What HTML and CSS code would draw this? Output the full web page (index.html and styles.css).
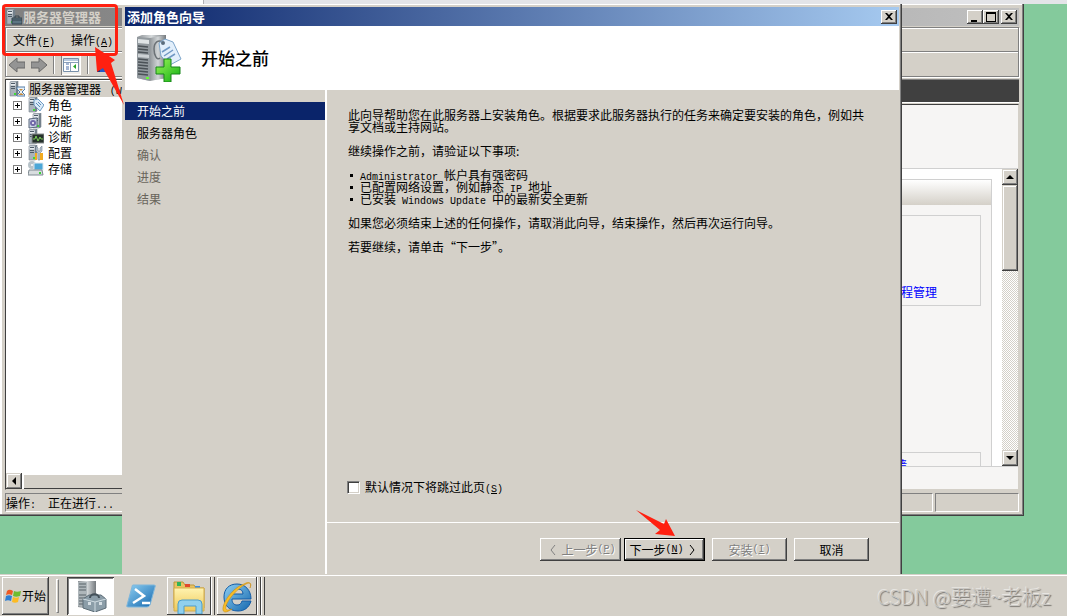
FILE: index.html
```html
<!DOCTYPE html>
<html lang="zh-CN">
<head>
<meta charset="utf-8">
<title>添加角色向导</title>
<link rel="stylesheet" href="styles.css">
</head>
<body>
<svg class="defs" aria-hidden="true">
  <defs>
    <linearGradient id="metal" x1="0" x2="1" y1="0" y2="0"><stop offset="0" stop-color="#8b9094"/><stop offset=".5" stop-color="#d5d9db"/><stop offset="1" stop-color="#74797d"/></linearGradient>
    <linearGradient id="green" x1="0" x2="1" y1="0" y2="1"><stop offset="0" stop-color="#9bf558"/><stop offset="1" stop-color="#0fae12"/></linearGradient>
    <linearGradient id="gold" x1="0" x2="0" y1="0" y2="1"><stop offset="0" stop-color="#fff3b0"/><stop offset="1" stop-color="#efc95a"/></linearGradient>
    <linearGradient id="blue" x1="0" x2="1" y1="0" y2="1"><stop offset="0" stop-color="#8fd0f2"/><stop offset="1" stop-color="#1467ae"/></linearGradient>
    <symbol id="mini-server" viewBox="0 0 16 16"><path d="M1 1l2-1h6v14l-2 1H1z" fill="#a9b3bb" stroke="#7b858d" stroke-width=".6"/><path d="M1.500 1.500h5v3h-5z" fill="#e8edf0"/><path d="M2 2.500h4M2 5.500h4M2 7.500h4" stroke="#4d5a66"/><path d="M7 1v14l2-1V0z" fill="#74818c"/><path d="M5 12h2v2H5z" fill="#3ddc34"/></symbol>
  </defs>
</svg>
<div class="screen">
  <div class="topstrip"><div class="topstrip-tab"></div></div>
  <main class="desktop">
    <section class="window manager">
      <header class="titlebar titlebar-off">
        <svg class="ic16" viewBox="0 0 16 16"><use href="#mini-server" width="16" height="16"/><path d="M6 9h10v6H6z" fill="#5d7583" stroke="#34454f"/><path d="M9 9V7h4v2M6 11h10" fill="none" stroke="#34454f"/></svg>
        <h2>服务器管理器</h2>
        <div class="caption">
          <button class="cap" aria-label="最小化"><svg viewBox="0 0 14 14"><path d="M3 10h6v2H3z"/></svg></button>
          <button class="cap" aria-label="最大化"><svg viewBox="0 0 14 14"><path d="M2 2h10v10H2zM3 4v7h8V4z" fill-rule="evenodd"/></svg></button>
          <button class="cap cap-close" aria-label="关闭"><svg viewBox="0 0 14 14"><path d="M3 3h2l2 2 2-2h2L8 6.500 11 10H9L7 8l-2 2H3l3-3.500z"/></svg></button>
        </div>
      </header>
      <div class="bars">
        <nav class="menubar"><button>文件<span class="lat">(<u>F</u>)</span></button><button>操作<span class="lat">(<u>A</u>)</span></button></nav>
        <div class="toolbar">
          <button aria-label="后退"><svg class="ic16" viewBox="0 0 16 16"><path d="M8 1v4h8v6H8v4L0 8z" fill="#949494" stroke="#696969"/></svg></button>
          <button aria-label="前进"><svg class="ic16" viewBox="0 0 16 16"><path d="M8 1v4H0v6h8v4l8-7z" fill="#949494" stroke="#696969"/></svg></button>
          <i class="sep"></i>
          <button class="pressed" aria-label="控制台树"><svg class="ic16" viewBox="0 0 16 16"><path d="M.5 1.500h15v13H.5z" fill="#fff" stroke="#7890aa"/><path d="M1 2h14v2H1z" fill="#b9cae0"/><path d="M3 7h3M3 10h3M3 12h3" stroke="#4a6ca8"/><path d="M7.500 5v9M1 5.500h14" stroke="#8a9fb8"/><path d="M13 7v5l-3-2.500z" fill="#27a427"/></svg></button>
          <i class="sep"></i>
          <button aria-label="帮助"><svg class="ic16" viewBox="0 0 16 16"><path d="M2 0h12v15H2z" fill="#2458c6"/><path d="M2 0h3v15H2z" fill="#153885"/></svg></button>
        </div>
      </div>
      <div class="split">
        <div class="treebox">
          <ul class="tree">
            <li class="root"><svg class="ic16" viewBox="0 0 16 16"><use href="#mini-server" width="16" height="16"/><path d="M8 6h8v2l-3 3 3 3v1H8v-1l3-3-3-3z" fill="#e8f2fa" stroke="#537ba5"/><path d="M10 8h4l-2 2zM9 14l3-2 3 2z" fill="#c58a3c"/></svg><span>服务器管理器 <span class="lat"> (WI</span></span></li>
            <li><button class="plus" aria-label="展开"></button><svg class="ic16" viewBox="0 0 16 16"><use href="#mini-server" width="16" height="16"/><path d="M6 3l4-1 6 6-4 6-6-6z" fill="#dbeaf7" stroke="#6f9cc4"/><path d="M8 6l4 4M10 5l3 3" stroke="#5d8cb8"/></svg><span>角色</span></li>
            <li><button class="plus" aria-label="展开"></button><svg class="ic16" viewBox="0 0 16 16"><use href="#mini-server" x="4" width="16" height="16"/><path d="M1 6l8-1v9l-8 1z" fill="#cfd8e8" stroke="#59677c"/><circle cx="5" cy="10" r="3" fill="#7168a8"/><circle cx="5" cy="10" r="1" fill="#fff"/></svg><span>功能</span></li>
            <li><button class="plus" aria-label="展开"></button><svg class="ic16" viewBox="0 0 16 16"><use href="#mini-server" width="16" height="16"/><path d="M4 5h12v9H4z" fill="#26322b" stroke="#8b8f91"/><path d="M5 10h2l1-3 2 5 2-4 1 2h2" fill="none" stroke="#79cb55"/></svg><span>诊断</span></li>
            <li><button class="plus" aria-label="展开"></button><svg class="ic16" viewBox="0 0 16 16"><use href="#mini-server" width="16" height="16"/><path d="M8 1v5l2 2v7h2V8l2-2V1l-2 2v3h-2V3z" fill="#b9c5cf" stroke="#708090" stroke-width=".6"/><path d="M7 8h2v7H7zM12 8h3v7h-3z" fill="#f1aa20"/></svg><span>配置</span></li>
            <li><button class="plus" aria-label="展开"></button><svg class="ic16" viewBox="0 0 16 16"><circle cx="4" cy="4" r="4" fill="#b8c3c9"/><circle cx="4" cy="4" r="1" fill="#fff"/><path d="M6 2h9v7H6z" fill="#4ca7d7" stroke="#dce7ee"/><path d="M1 9h13l1 5H0z" fill="#d8dddf" stroke="#7f8a91"/><path d="M11 11h2v2h-2z" fill="#39d335"/></svg><span>存储</span></li>
          </ul>
          <div class="hscroll"><button class="sb" aria-label="向左滚动"><svg viewBox="0 0 8 8"><path d="M6 0v8L2 4z"/></svg></button><div class="hthumb"></div></div>
        </div>
        <div class="pane">
          <div class="darkband"></div>
          <div class="pane-body">
            <div class="summary"></div>
            <div class="scroller">
              <div class="cards">
                <div class="card">
                  <div class="card-head"></div>
                  <div class="box box-a"><a href="#">程管理</a></div>
                  <div class="box box-b"><a href="#">墙</a></div>
                </div>
              </div>
              <div class="vscroll">
                <button class="sb" aria-label="向上滚动"><svg viewBox="0 0 8 8"><path d="M4 2l4 4H0z"/></svg></button>
                <div class="vthumb"></div>
                <button class="sb sb-end" aria-label="向下滚动"><svg viewBox="0 0 8 8"><path d="M0 2h8L4 6z"/></svg></button>
              </div>
            </div>
            <div class="below"></div>
          </div>
        </div>
      </div>
      <footer class="status"><div class="status-main">操作<span class="lat">:  </span>正在进行<span class="lat">...</span></div><div class="status-end"></div></footer>
    </section>

    <section class="window wizard">
      <header class="titlebar titlebar-on">
        <h2>添加角色向导</h2>
        <button class="cap cap-close" aria-label="关闭"><svg viewBox="0 0 14 14"><path d="M3 3h2l2 2 2-2h2L8 6.500 11 10H9L7 8l-2 2H3l3-3.500z"/></svg></button>
      </header>
      <div class="wizard-head">
        <svg class="ic48" viewBox="0 0 48 48">
          <path d="M2 3l5-2h24v43l-17 3L2 44z" fill="url(#metal)"/>
          <path d="M2 3l13 1v43L2 44z" fill="#939a9f"/><path d="M15 4l16-3v43l-16 3z" fill="url(#metal)" opacity=".9"/>
          <path d="M3 5l11 1v4L3 9z" fill="#dfe4e6"/>
          <path d="M3 12l10 1M3 15l10 1M3 18l10 1M3 25l10 1M3 28l10 1M3 31l10 1M3 34l10 1M3 37l10 1M3 40l10 1" stroke="#4b5257" stroke-width="1.500"/>
          <path d="M3 20l11 1v3L3 23z" fill="#cdd2d5"/><path d="M11 43h3v2h-3z" fill="#6f3"/>
          <path d="M29 9c-6-5-10 0-10 6s3 12 6 9" fill="none" stroke="#6c7277" stroke-width="1.500"/>
          <path d="M24 9l6-4 8 3 8 17-11 6-9-9z" fill="#e2effb" stroke="#7da5ca"/><circle cx="28" cy="9" r="2" fill="#5b6d7c"/>
          <path d="M27 18l8-5M29 22l9-6M32 25l8-5" stroke="#7098c4" stroke-width="1.500"/>
          <path d="M29 25h7v8h9v7h-9v8h-7v-8h-8v-7h8z" fill="url(#green)" stroke="#168519"/>
        </svg>
        <h1>开始之前</h1>
      </div>
      <div class="wizard-body">
        <ol class="steps">
          <li class="current">开始之前</li><li>服务器角色</li><li class="later">确认</li><li class="later">进度</li><li class="later">结果</li>
        </ol>
        <div class="page">
          <div class="page-text">
            <p>此向导帮助您在此服务器上安装角色。根据要求此服务器执行的任务来确定要安装的角色，例如共享文档或主持网站。</p>
            <p>继续操作之前，请验证以下事项:</p>
            <ul class="facts">
              <li><span class="lat">Administrator </span>帐户具有强密码</li>
              <li>已配置网络设置，例如静态<span class="lat"> IP </span>地址</li>
              <li>已安装<span class="lat"> Windows Update </span>中的最新安全更新</li>
            </ul>
            <p>如果您必须结束上述的任何操作，请取消此向导，结束操作，然后再次运行向导。</p>
            <p>若要继续，请单击“下一步”。</p>
          </div>
          <label class="skip"><input type="checkbox"><span>默认情况下将跳过此页<span class="lat">(<u>S</u>)</span></span></label>
          <div class="actions">
            <button class="btn btn-step" disabled><svg class="chev" viewBox="0 0 6 10"><path d="M5 0L1 5l4 5"/></svg>上一步<span class="lat">(<u>P</u>)</span></button>
            <button class="btn btn-step btn-default">下一步<span class="lat">(<u>N</u>)</span><svg class="chev" viewBox="0 0 6 10"><path d="M1 0l4 5-4 5"/></svg></button>
            <button class="btn btn-apart" disabled>安装<span class="lat">(<u>I</u>)</span></button>
            <button class="btn btn-apart">取消</button>
          </div>
        </div>
      </div>
    </section>
    <div class="mark-box"></div>
    <svg class="mark-arrow arrow-menu" viewBox="0 0 34 64"><path d="M2 2L22 15l-4 3 13 42-21-37-6 4z" fill="#ff2010"/></svg>
    <svg class="mark-arrow arrow-next" viewBox="0 0 44 30"><path d="M2 1l28 14 2-5 9 17-20-2 5-4z" fill="#ff2010"/></svg>
  </main>
  <footer class="taskbar">
    <button class="start"><svg class="ic16" viewBox="0 0 16 16"><path d="M2 3c2-2 4-1 6 0L7 7C5 6 3 6 1 7z" fill="#ee5a24"/><path d="M9 3c2 1 4 1 7 0l-1 5c-3 1-5 1-7 0z" fill="#6fbd2f"/><path d="M1 8c2-1 4-1 6 0l-1 5c-2-1-4-1-6 0z" fill="#2e7fd4"/><path d="M8 9c2 1 4 1 6 0l-1 5c-2 1-4 1-6 0z" fill="#fdbb23"/></svg>开始</button>
    <i class="grip"></i>
    <button class="task task-active" aria-label="服务器管理器"><svg class="ic32" viewBox="0 0 32 32"><path d="M3 1h18v25l-8 3-10-2z" fill="url(#metal)"/><path d="M3 2h9v25l-9-1z" fill="#aeb6ba"/><path d="M4 4h7M4 7h7M4 10h7M4 15h7M4 18h7M4 21h7M4 24h7" stroke="#596268"/><path d="M8 19l6-4h12l5 4v9l-11 4-12-4z" fill="#8b9da8" stroke="#5c6c76"/><path d="M8 19l12 3 11-3M20 22v10" fill="none" stroke="#d0dce2"/><path d="M15 18c0-5 9-5 9 0" fill="none" stroke="#44515a" stroke-width="2"/><path d="M13 22h3v3h-3zM24 22h3v3h-3z" fill="#d6dfe4"/></svg></button>
    <button class="quick" aria-label="PowerShell"><svg class="ic32" viewBox="0 0 32 32"><path d="M8 5h21q2 0 1 2l-5 18q-1 2-3 2H3q-2 0-1-2L7 7q0-2 1-2z" fill="url(#blue)" stroke="#7fb7dc"/><path d="M10 9l9 7-11 7M17 23h8" fill="none" stroke="#fff" stroke-width="2.500"/></svg></button>
    <button class="task task-stack" aria-label="资源管理器"><svg class="ic36" viewBox="0 0 36 36"><path d="M3 4h9l2 3h9l2 3h8v20H3z" fill="#e8c462" stroke="#bd963b"/><path d="M6 4h4v4H6z" fill="#2fb457"/><path d="M14 6h5v3h-5z" fill="#e2492e"/><path d="M24 8h5v3h-5z" fill="#3c8de0"/><path d="M3 10h30v23H3z" fill="url(#gold)" stroke="#d4ad4b"/><path d="M7 36V26q0-4 4-4h16q4 0 4 4v10h-6v-8H13v8z" fill="#90d0ed" stroke="#4c9dca"/></svg></button>
    <button class="task task-stack task-ie" aria-label="Internet Explorer"><svg class="ic36" viewBox="0 0 36 36"><path d="M32 23c-2 7-7 10-13 10C10 33 5 27 5 19S10 6 18 6s14 6 14 15H13c0 4 2 6 5 6 3 0 4-1 5-4zM13 16h11c0-3-2-5-5-5s-5 2-6 5z" fill="url(#blue)" fill-rule="evenodd" stroke="#125ba6"/><path d="M31 10c2-5-1-7-6-4C15 9 3 24 4 32c1 4 6 1 9-1-5 2-7 1-6-3C9 21 19 10 27 6c4-2 6-1 4 4z" fill="#f7bd28" stroke="#c98d16" stroke-width=".6"/></svg></button>
    <span class="watermark">CSDN @要遭~老板z</span>
  </footer>
</div>
</body>
</html>
```
FILE: styles.css
```css
* { box-sizing: border-box; }
:root {
  --face: #d4d0c8;
  --shade: #808080;
  --dark: #404040;
  --green: #84ca9c;
}
body {
  margin: 0;
  font: 12px/16px "Noto Sans CJK SC", "Liberation Sans", sans-serif;
  color: #000;
}
button { font: inherit; color: inherit; padding: 0; border: 0; background: none; }
h1, h2, p, ul, ol { margin: 0; padding: 0; font-size: inherit; }
ul, ol { list-style: none; }
svg { display: block; flex: none; }
.defs { position: absolute; width: 0; height: 0; }
.lat { font: 10px/1px "Liberation Mono", monospace; white-space: pre; }
.ic16 { width: 16px; height: 16px; }
.ic32 { width: 32px; height: 32px; }
.ic36 { width: 36px; height: 36px; }
.ic48 { width: 48px; height: 48px; }

.screen { display: flex; flex-direction: column; height: 100vh; overflow: hidden; }
.topstrip { height: 4px; background: #e3e4e8; }
.topstrip-tab { width: 204px; height: 4px; background: #fff; border-right: 1px solid #b0b0b4; }
.desktop { position: relative; flex: 1; min-height: 0; background: var(--green); }

/* windows */
.window {
  position: absolute;
  display: flex;
  flex-direction: column;
  background: var(--face);
  border-right: 1px solid var(--dark);
  box-shadow: inset -1px 0 var(--shade), inset 0 1px #fff;
  overflow: hidden;
}
.manager {
  inset: 0 43px 58px 0;
  padding: 4px 4px 3px 5px;
  border-bottom: 1px solid var(--dark);
  box-shadow: inset -1px -1px var(--shade), inset 2px 1px #fff;
}
.wizard { inset: 0 165px 0 122px; padding: 3px 2px 0 3px; }
.titlebar { display: flex; align-items: center; height: 18px; padding: 0 2px; flex: none; }
.titlebar h2 { font-size: 13px; line-height: 18px; font-weight: 700; flex: 1; }
.titlebar-off { background: linear-gradient(90deg, #808080, #c0c0c0); color: var(--face); gap: 1px; padding-left: 1px; }
.titlebar-on { background: linear-gradient(90deg, #0a246a, #a6caf0); color: #fff; height: 19px; }
.caption { display: flex; }
.cap {
  width: 16px;
  height: 14px;
  background: var(--face);
  box-shadow: inset -1px -1px var(--dark), inset 1px 1px #fff, inset -2px -2px var(--shade);
}
.cap svg { width: 14px; height: 14px; margin: 0 1px; }
.caption .cap-close { margin-left: 2px; }

/* manager */
.bars { margin-top: 1px; border: 1px solid var(--shade); box-shadow: inset 1px 1px #fff, 1px 1px #fff; flex: none; }
.menubar { display: flex; gap: 16px; height: 24px; align-items: center; padding: 0 7px; border-bottom: 1px solid var(--shade); }
.toolbar { display: flex; align-items: center; gap: 6px; height: 24px; border-top: 1px solid #fff; padding: 0 3px; }
.sep { width: 2px; height: 18px; border-left: 1px solid var(--shade); background: #fff; }
.pressed { padding: 2px; background: #f0eeea; box-shadow: inset 1px 1px var(--shade), inset -1px -1px #fff; }
.split { display: grid; grid-template-columns: 240px 1fr; grid-template-rows: minmax(0, 1fr); gap: 4px; flex: 1; min-height: 0; margin-top: 2px; }
.treebox { display: flex; flex-direction: column; background: #fff; border: 1px solid var(--dark); border-bottom-color: var(--face); }
.tree { flex: 1; padding: 1px 0 0 3px; }
.tree li { display: flex; align-items: center; gap: 4px; height: 16px; padding-left: 4px; }
.tree li .ic16 { margin-left: 2px; }
.tree .root { padding-left: 0; gap: 3px; }
.tree .root .ic16 { margin-left: 0; }
.root > span { flex: 1; background: var(--face); padding-left: 1px; white-space: pre; }
.plus {
  width: 9px;
  height: 9px;
  border: 1px solid var(--shade);
  background: linear-gradient(#000, #000) center / 5px 1px no-repeat, linear-gradient(#000, #000) center / 1px 5px no-repeat, #fff;
}
.sb {
  display: grid;
  place-items: center;
  flex: none;
  width: 16px;
  height: 16px;
  background: var(--face);
  box-shadow: inset -1px -1px var(--dark), inset 1px 1px var(--face), inset -2px -2px var(--shade), inset 2px 2px #fff;
}
.sb svg { width: 8px; height: 8px; }
.hscroll { display: flex; height: 16px; }
.hthumb { flex: 1; background: var(--face); box-shadow: inset 2px 2px #fff, inset 0 -1px var(--dark); }
.pane { display: flex; flex-direction: column; border-top: 1px solid var(--shade); }
.darkband { height: 23px; background: var(--dark); border-bottom: 1px solid #fff; flex: none; }
.pane-body { display: flex; flex-direction: column; flex: 1; min-height: 0; border: 1px solid var(--face); border-top-color: var(--dark); margin-top: 1px; background: #f6f5f4; }
.summary { height: 64px; border-bottom: 1px solid #d0d0d0; flex: none; }
.scroller { display: flex; flex: 1; min-height: 0; background: #fff; border-bottom: 1px solid #d0d0d0; }
.cards { flex: 1; padding: 10px 10px 0; overflow: hidden; }
.card { display: flex; flex-direction: column; gap: 10px; height: 320px; border: 1px solid #d0d0d0; background: #f6f5f4; }
.card-head { height: 25px; background: linear-gradient(#fff, #d4d0c8); }
.box { display: flex; align-items: flex-end; justify-content: flex-end; margin: 0 10px; border: 1px solid #d0d0d0; }
.box a { color: #00f; text-decoration: none; }
.box-a { height: 91px; padding: 0 43px 5px 0; }
.box-b { height: 40px; margin-top: 136px; padding: 4px 73px 0 0; align-items: flex-start; }
.vscroll { display: flex; flex-direction: column; width: 16px; background: repeating-conic-gradient(#d4d0c8 0 25%, #fff 0 50%) 0 0 / 2px 2px; }
.vthumb { height: 86px; flex: none; background: var(--face); box-shadow: inset -1px -1px var(--dark), inset 1px 1px var(--face), inset -2px -2px var(--shade), inset 2px 2px #fff; }
.sb-end { margin-top: auto; }
.below { height: 22px; flex: none; }
.status { display: flex; gap: 2px; height: 19px; margin-top: 3px; flex: none; }
.status-main, .status-end { border: 1px solid; border-color: var(--shade) #fff #fff var(--shade); line-height: 17px; }
.status-main { flex: 1; }
.status-end { width: 84px; }

/* wizard */
.wizard-head { display: flex; align-items: center; gap: 18px; height: 64px; padding-left: 10px; background: #fff; flex: none; }
.wizard-head h1 { font-size: 17px; line-height: 24px; font-weight: 500; }
.wizard-body { display: grid; grid-template-columns: 200px 1fr; grid-template-rows: minmax(0, 1fr); flex: 1; min-height: 0; }
.steps { padding-top: 12px; }
.steps li { height: 18px; line-height: 18px; margin-bottom: 4px; padding-left: 12px; }
.steps .current { background: #0a246a; color: #fff; }
.steps .later { color: #69655c; }
.page { display: flex; flex-direction: column; border-left: 2px solid #fff; }
.page-text { flex: 1; display: flex; flex-direction: column; gap: 12px; padding: 19px 32px 0 21px; line-height: 12px; }
.facts li { padding-left: 12px; background: linear-gradient(#000, #000) 2px 5px / 3px 3px no-repeat; white-space: nowrap; }
.skip { display: flex; align-items: center; gap: 5px; padding: 0 20px; margin-bottom: 27px; }
.skip input { appearance: none; width: 13px; height: 13px; margin: 0; background: #fff; border: 1px solid; border-color: var(--shade) #fff #fff var(--shade); box-shadow: inset 1px 1px var(--dark), inset -1px -1px var(--face); }
.actions { display: flex; justify-content: flex-end; gap: 3px; height: 52px; padding: 15px 30px 0 0; border-top: 1px solid #fff; }
.btn {
  display: flex;
  align-items: center;
  justify-content: center;
  width: 75px;
  height: 23px;
  background: var(--face);
  box-shadow: inset -1px -1px var(--dark), inset 1px 1px #fff, inset -2px -2px var(--shade);
}
.btn .lat { line-height: 12px; }
.btn-step { width: 81px; }
.btn-apart { margin-left: 4px; }
.btn-default { border: 1px solid #000; }
.btn:disabled { color: var(--shade); text-shadow: 1px 1px #fff; }
.chev { width: 6px; height: 10px; margin: 0 5px; fill: none; stroke: currentColor; }

/* annotations above the windows */
.mark-box { position: absolute; left: 2px; top: 0; width: 116px; height: 52px; border: 3px solid #ff2010; border-radius: 4px; }
.mark-arrow { position: absolute; }
.arrow-menu { left: 93px; top: 41px; width: 34px; height: 64px; }
.arrow-next { left: 634px; top: 505px; width: 44px; height: 30px; }

/* taskbar */
.taskbar { display: flex; align-items: flex-start; height: 42px; padding: 2px 16px 0 2px; background: var(--face); border-top: 1px solid var(--face); box-shadow: inset 0 1px #fff; flex: none; }
.start, .task { display: flex; align-items: center; justify-content: center; height: 38px; box-shadow: inset -1px -1px var(--dark), inset 1px 1px #fff, inset -2px -2px var(--shade); }
.start { width: 47px; gap: 1px; }
.grip { width: 3px; height: 34px; margin: 2px 8px 0 7px; border: 1px solid; border-color: #fff var(--shade) var(--shade) #fff; }
.task { width: 44px; }
.task-active { width: 47px; background: #fff; box-shadow: inset 1px 1px var(--dark), inset -1px -1px #fff, inset 2px 2px var(--shade); }
.quick { display: grid; place-items: center; width: 32px; height: 38px; margin: 0 10px 0 11px; }
.task-stack { border-right: 0; box-shadow: inset -1px -1px var(--dark), inset 1px 1px #fff, 1px 0 #fff, 3px 0 var(--face), 4px 0 var(--dark); }
.task-ie { margin-left: 6px; width: 40px; box-shadow: inset -1px -1px var(--dark), inset 1px 1px #fff, 1px 0 #fff, 3px 0 var(--face), 4px 0 var(--dark), 5px 0 #fff, 7px 0 var(--face), 8px 0 var(--dark); }
.watermark { margin-left: auto; padding-top: 6px; font: 300 20px/28px "Noto Sans CJK SC", "Liberation Sans", sans-serif; color: #c9c7c3; text-shadow: 1px 1px 1px #77746f, -1px -1px #e8e6e2; }
```
